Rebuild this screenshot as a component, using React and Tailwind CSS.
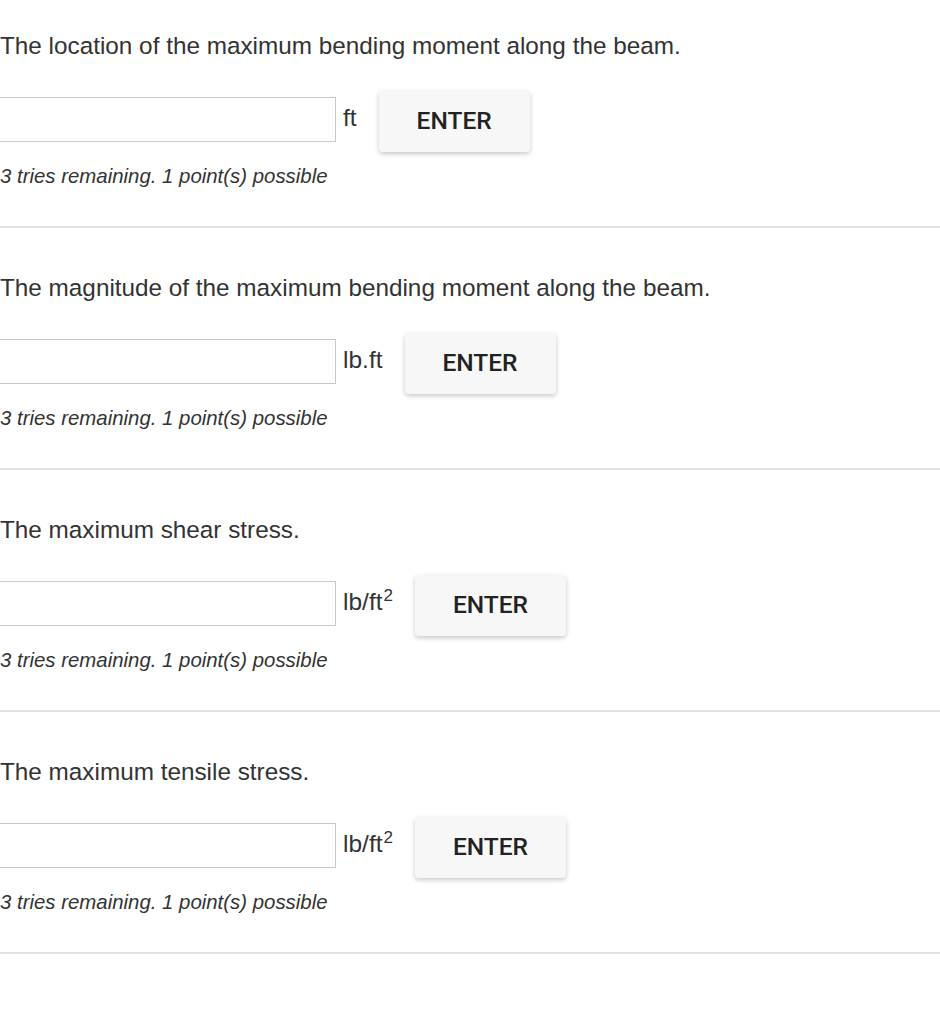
import React from "react";

const Sup = () => <sup className="text-[17px] relative top-[-9px] ml-[1px]">2</sup>;

const items = [
  { q: "The location of the maximum bending moment along the beam.", unit: <>ft</> },
  { q: "The magnitude of the maximum bending moment along the beam.", unit: <>lb.ft</> },
  { q: "The maximum shear stress.", unit: <>lb/ft<Sup /></> },
  { q: "The maximum tensile stress.", unit: <>lb/ft<Sup /></> },
];

export default function App() {
  return (
    <div className="w-[940px] bg-white text-[#333] font-['Liberation_Sans',Arial,sans-serif] pt-[30px]">
      {items.map((it, i) => (
        <div key={i} className={i > 0 ? "pt-[44px]" : ""}>
          <div className="text-[24.3px] leading-[32px] text-[#333] whitespace-nowrap">{it.q}</div>
          <div className="mt-[29px] flex items-start h-[61px]">
            <div className="mt-[6px] w-[337px] h-[45px] border border-[#c8c8c8] ml-[-1px] bg-white" />
            <div className="ml-[7px] mt-[14px] text-[24.5px] leading-[26px] text-[#333] whitespace-nowrap">{it.unit}</div>
            <button className="ml-[22px] w-[151px] h-[61px] bg-[#f7f7f7] rounded-[4px] shadow-[0_2px_5px_rgba(0,0,0,0.22)] text-[24.5px] font-medium text-[#222] font-['Roboto',sans-serif]">
              ENTER
            </button>
          </div>
          <div className="mt-[11px] text-[20.4px] italic leading-[26px] text-[#333] whitespace-nowrap">
            3 tries remaining. 1 point(s) possible
          </div>
          <div className="mt-[37px] h-[2px] bg-[#e2e2e2]" />
        </div>
      ))}
      <div className="h-[70px]" />
    </div>
  );
}
